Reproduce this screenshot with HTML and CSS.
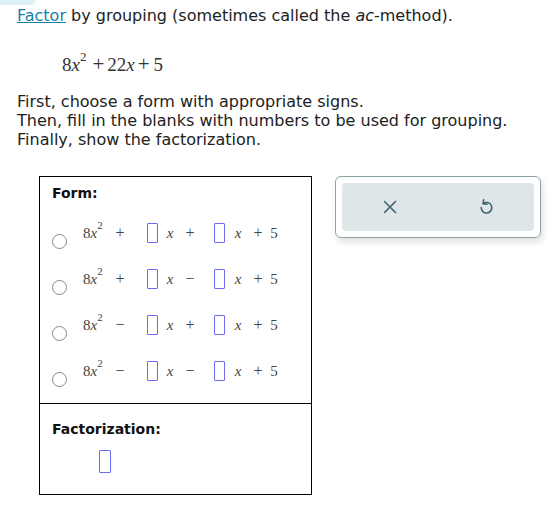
FILE: index.html
```html
<!DOCTYPE html>
<html>
<head>
  <title>Factor by grouping</title>
  <link rel="stylesheet" href="styles.css">
</head>
<body>
  <div class="tab-corner"></div>

  <p class="prompt"><a href="#" class="term">Factor</a> by grouping (sometimes called the <i>ac</i>-method).</p>

  <div class="equation">
    <span>8<i>x</i><sup>2</sup></span><span class="op first">+</span><span>22<i>x</i></span><span class="op">+</span><span>5</span>
  </div>

  <p class="steps">
    First, choose a form with appropriate signs.<br>
    Then, fill in the blanks with numbers to be used for grouping.<br>
    Finally, show the factorization.
  </p>

  <div class="work">
    <div class="answer-panel">
      <div class="section form-section">
        <div class="label">Form:</div>

        <div class="form-row">
          <span class="radio"></span>
          <span class="term-lead">8<i>x</i><sup>2</sup></span>
          <span class="sign s1">+</span>
          <span class="blank"></span><i class="var v1">x</i>
          <span class="sign s2">+</span>
          <span class="blank"></span><i class="var v2">x</i>
          <span class="sign s3">+</span><span class="const">5</span>
        </div>

        <div class="form-row">
          <span class="radio"></span>
          <span class="term-lead">8<i>x</i><sup>2</sup></span>
          <span class="sign s1">+</span>
          <span class="blank"></span><i class="var v1">x</i>
          <span class="sign s2">&minus;</span>
          <span class="blank"></span><i class="var v2">x</i>
          <span class="sign s3">+</span><span class="const">5</span>
        </div>

        <div class="form-row">
          <span class="radio"></span>
          <span class="term-lead">8<i>x</i><sup>2</sup></span>
          <span class="sign s1">&minus;</span>
          <span class="blank"></span><i class="var v1">x</i>
          <span class="sign s2">+</span>
          <span class="blank"></span><i class="var v2">x</i>
          <span class="sign s3">+</span><span class="const">5</span>
        </div>

        <div class="form-row">
          <span class="radio"></span>
          <span class="term-lead">8<i>x</i><sup>2</sup></span>
          <span class="sign s1">&minus;</span>
          <span class="blank"></span><i class="var v1">x</i>
          <span class="sign s2">&minus;</span>
          <span class="blank"></span><i class="var v2">x</i>
          <span class="sign s3">+</span><span class="const">5</span>
        </div>
      </div>

      <div class="section fact-section">
        <div class="label">Factorization:</div>
        <div class="fact-blank"><span class="blank big"></span></div>
      </div>
    </div>

    <div class="tool-panel">
      <div class="tool-buttons">
        <button class="tool-button" title="Clear">
          <svg width="16" height="16" viewBox="0 0 16 16"><path d="M2.5 2.5 L13.5 13.5 M13.5 2.5 L2.5 13.5" stroke="#3d6270" stroke-width="1.6" fill="none" stroke-linecap="round"/></svg>
        </button>
        <button class="tool-button" title="Undo">
          <svg width="16" height="18" viewBox="0 0 16 18"><path d="M5.2 5.6 A5.3 5.3 0 1 1 3.2 9.6" stroke="#3d6270" stroke-width="1.6" fill="none" stroke-linecap="round"/><path d="M5.6 1.8 L5.2 5.6 L9 6.2" stroke="#3d6270" stroke-width="1.6" fill="none" stroke-linecap="round" stroke-linejoin="round"/></svg>
        </button>
      </div>
    </div>
  </div>
</body>
</html>
```

FILE: styles.css
```css
body {
  margin: 0;
  padding: 0 17px;
  font-family: "DejaVu Sans", Verdana, sans-serif;
  font-size: 16px;
  color: #222;
  background-color: #FFF;
}

.tab-corner {
  position: absolute;
  top: 0;
  left: 0;
  width: 36px;
  height: 5px;
  background-color: #e0f1f8;
  border-bottom-right-radius: 6px;
}

.prompt {
  margin: 6px 0 0 0;
  line-height: 20px;
}

.term {
  color: #1a7fa8;
  text-decoration: underline;
}

.equation {
  margin: 26px 0 0 45px;
  font-family: "Liberation Serif", "Times New Roman", serif;
  font-size: 19px;
  color: #333;
  height: 26px;
}

.equation sup {
  font-size: 13px;
  vertical-align: 10px;
  line-height: 0;
}

.equation .op {
  font-size: 21px;
  margin: 0 4px 0 3px;
}

.equation .op.first {
  margin: 0 3px 0 6px;
}

.steps {
  margin: 14px 0 0 0;
  line-height: 19px;
}

.work {
  display: flex;
  align-items: flex-start;
  margin-top: 27px;
  margin-left: 22px;
}

.answer-panel {
  width: 272px;
  border: 1px solid #000;
}

.section {
  padding: 6px 12px;
}

.form-section {
  border-bottom: 1px solid #000;
  padding-bottom: 9px;
}

.form-section .label {
  margin-bottom: 7px;
}

.label {
  font-weight: bold;
  font-size: 14px;
  color: #111;
  line-height: 20px;
}

.form-row {
  display: flex;
  align-items: center;
  height: 46px;
  font-family: "Liberation Serif", "Times New Roman", serif;
  font-size: 15px;
  color: #444;
}

.form-row .radio {
  width: 13px;
  height: 13px;
  border: 1px solid #888;
  border-radius: 50%;
  margin-top: 16px;
  margin-right: 16px;
}

.form-row .term-lead {
  width: 28px;
}

.form-row sup {
  font-size: 11px;
  vertical-align: 9px;
  line-height: 0;
}

.form-row .sign {
  font-size: 16px;
  text-align: center;
}

.form-row .s1 {
  width: 18px;
  margin-right: 18px;
}

.form-row .s2 {
  width: 16px;
  margin-right: 16px;
}

.form-row .s3 {
  width: 14px;
}

.form-row .var {
  text-align: center;
}

.form-row .v1 {
  width: 24px;
}

.form-row .v2 {
  width: 26px;
}

.form-row .const {
  width: 18px;
  text-align: center;
}

.blank {
  display: inline-block;
  width: 9px;
  height: 18px;
  border: 1.5px solid #6b6bf4;
  border-radius: 1px;
}

.fact-section {
  padding-top: 15px;
  height: 90px;
  box-sizing: border-box;
}

.fact-blank {
  margin: 11px 0 0 47px;
  height: 24px;
}

.blank.big {
  width: 10px;
  height: 21px;
}

.tool-panel {
  margin-left: 23px;
  width: 193px;
  padding: 6px;
  border: 1px solid #8ea3a9;
  border-radius: 6px;
  box-shadow: 2px 4px 6px rgba(0, 0, 0, 0.12);
}

.tool-buttons {
  display: flex;
  height: 48px;
  background-color: #dfe6e8;
  border-radius: 4px;
}

.tool-button {
  flex: 1;
  border: none;
  background: none;
  cursor: pointer;
  display: flex;
  align-items: center;
  justify-content: center;
  padding: 0;
}
```
